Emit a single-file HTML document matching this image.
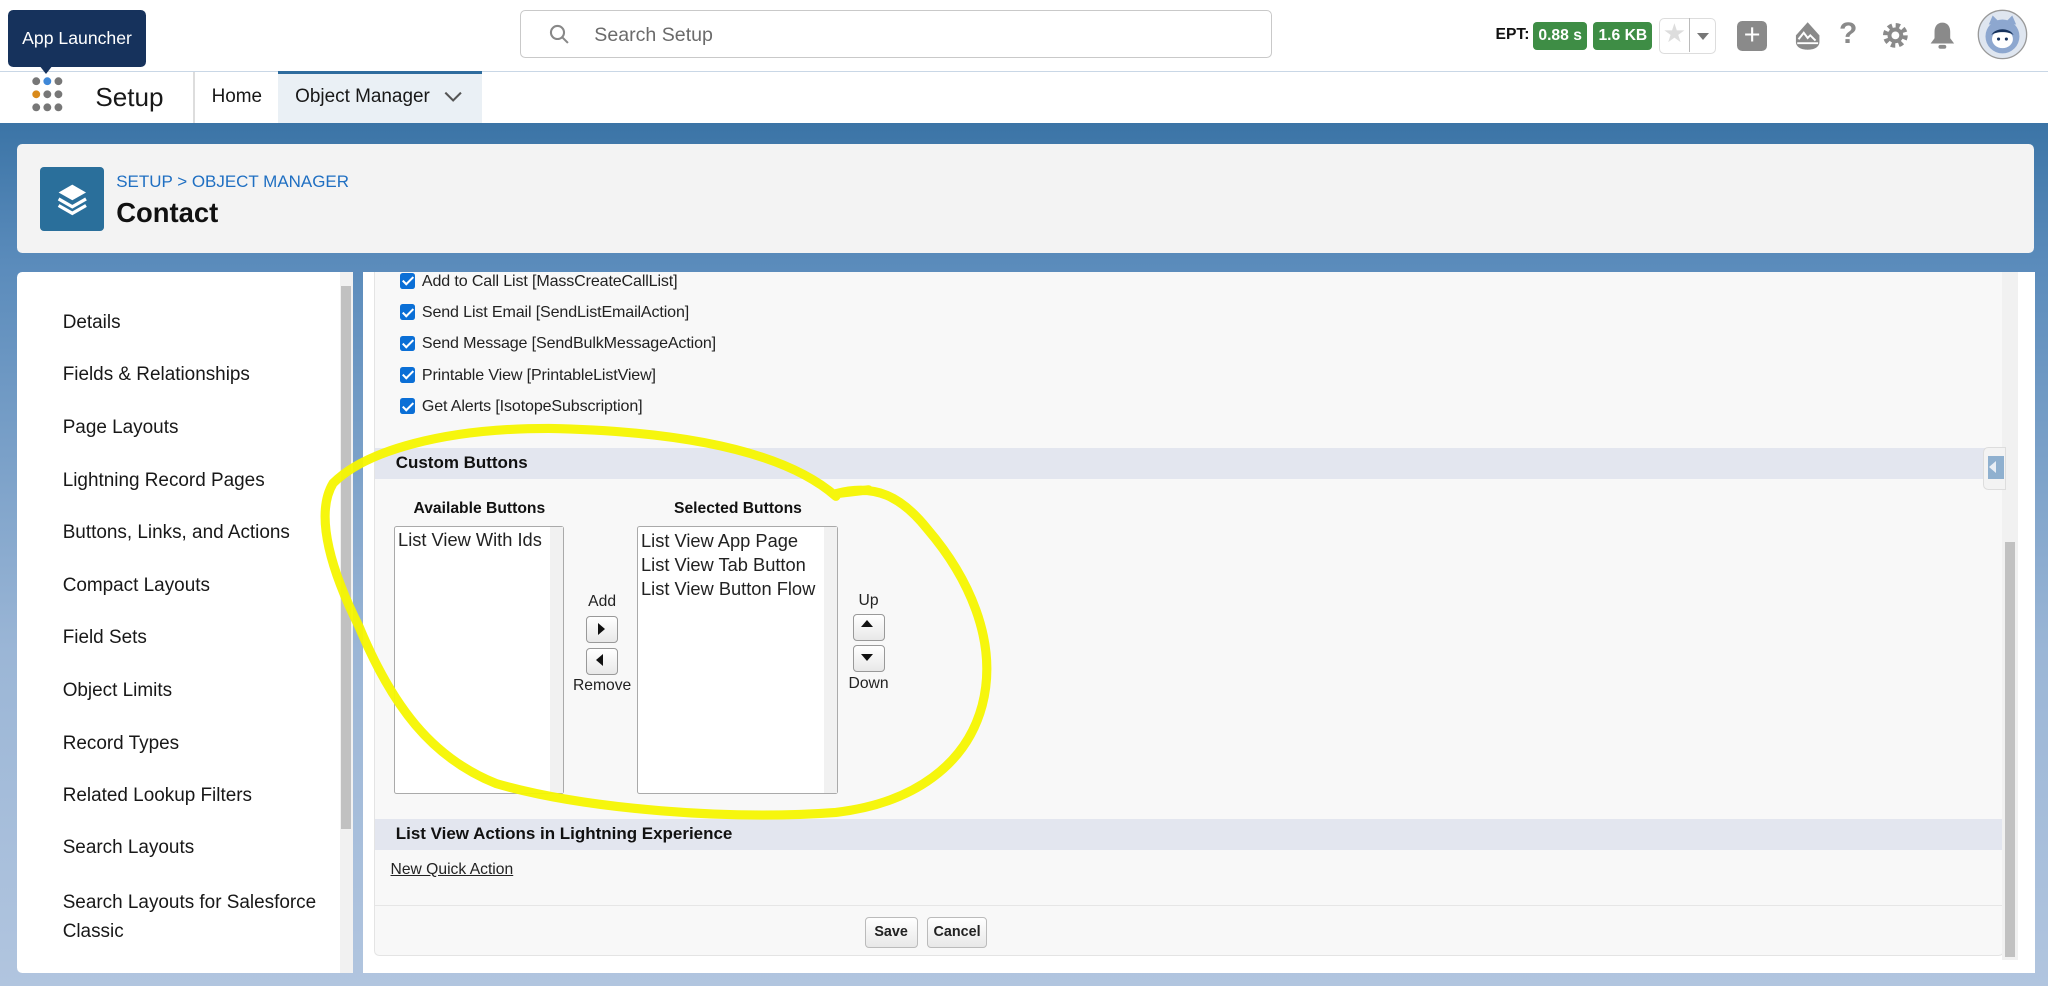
<!DOCTYPE html>
<html><head><meta charset="utf-8"><style>
html,body{margin:0;padding:0;width:2048px;height:986px;overflow:hidden}
#w{zoom:1.30612;width:1568px;height:755px;position:relative;font-family:"Liberation Sans",Arial,sans-serif;background:linear-gradient(#3b74a6 0px,#3b74a6 94px,#5a8bbb 200px,#9bb6d6 500px,#b1c5df 755px);overflow:hidden}
.a{position:absolute}
.cb{position:absolute;left:306px;width:12px;height:12px;background:#0b6fd6;border-radius:2px}
.cb:after{content:"";position:absolute;left:4px;top:1px;width:3px;height:7px;border:solid #fff;border-width:0 2px 2px 0;transform:rotate(45deg)}
.ct{position:absolute;left:323px;font-size:12.3px;color:#222;letter-spacing:-0.1px}
.nav{position:absolute;left:48px;font-size:14.5px;color:#181818}
.lb{position:absolute;background:#fff;border:1px solid #aaa;border-radius:2px}
.lb .sb{position:absolute;right:0;top:0;bottom:0;width:10px;background:#f1f1f1}
.btn{position:absolute;background:linear-gradient(#fff,#e8e8e8);border:1px solid #999;border-radius:3px}
</style></head><body><div id="w">
<div class="a" style="left:0;top:0;width:1568px;height:54px;background:#fff;border-bottom:1px solid #c9d7e6"></div>
<div class="a" style="left:398px;top:8px;width:574px;height:35px;border:1px solid #c9c9c9;border-radius:4px;background:#fff"></div>
<svg class="a" style="left:420px;top:18px" width="16" height="16" viewBox="0 0 16 16"><circle cx="6.5" cy="6.5" r="5" fill="none" stroke="#888" stroke-width="1.6"/><path d="M10 10l4.5 4.5" stroke="#888" stroke-width="1.6"/></svg>
<div class="a" style="left:455px;top:18px;font-size:15px;color:#6b6b6b">Search Setup</div>
<div class="a" style="left:1145px;top:20px;font-size:12px;font-weight:bold;color:#111">EPT:</div>
<div class="a" style="left:1174px;top:17px;width:41px;height:21px;background:#3e8d45;border-radius:3px;color:#fff;font-size:12px;font-weight:bold;text-align:center;line-height:21px">0.88 s</div>
<div class="a" style="left:1220px;top:17px;width:45px;height:21px;background:#3e8d45;border-radius:3px;color:#fff;font-size:12px;font-weight:bold;text-align:center;line-height:21px">1.6 KB</div>
<div class="a" style="left:1270px;top:14px;width:42px;height:26px;border:1px solid #ddd;border-radius:4px;background:#fff"></div>
<div class="a" style="left:1293px;top:14px;width:20px;height:26px;border-left:1px solid #bbb"></div>
<div class="a" style="left:1273px;top:14px;font-size:20px;color:#ddd">★</div>
<div class="a" style="left:1299px;top:25px;border:5px solid transparent;border-top:6px solid #777"></div>
<div class="a" style="left:1330px;top:16px;width:23px;height:23px;background:#8a8a8a;border-radius:4px;color:#fff;font-size:22px;line-height:22px;text-align:center">+</div>
<svg class="a" style="left:1372px;top:16px" width="24" height="24" viewBox="0 0 24 24"><path d="M12 1L3 11v5c0 4 4 6 9 6s9-2 9-6v-5z" fill="#8a8a8a"/><path d="M5 14l4-5 3 4 2-2 4 4M4 17h16" stroke="#fff" stroke-width="1.5" fill="none"/></svg>
<div class="a" style="left:1408px;top:13px;font-size:23px;color:#8a8a8a;font-weight:bold">?</div>
<svg class="a" style="left:1440px;top:16px" width="22" height="22" viewBox="0 0 22 22"><circle cx="11" cy="11" r="7" fill="none" stroke="#8a8a8a" stroke-width="5" stroke-dasharray="3 2.5"/><circle cx="11" cy="11" r="6" fill="#8a8a8a"/><circle cx="11" cy="11" r="3" fill="#fff"/></svg>
<svg class="a" style="left:1476px;top:15px" width="22" height="24" viewBox="0 0 22 24"><path d="M11 2c-4 0-6 3-6 7v5l-3 4h18l-3-4V9c0-4-2-7-6-7z" fill="#8a8a8a"/><rect x="8" y="19" width="6" height="3" rx="1.5" fill="#8a8a8a"/></svg>
<svg class="a" style="left:1514px;top:7px" width="39" height="39" viewBox="0 0 39 39"><circle cx="19.5" cy="19.5" r="18.5" fill="#dfe6f0" stroke="#999"/><circle cx="19.5" cy="21" r="13" fill="#8da7cf"/><path d="M9 12l3-7 5 5M30 12l-3-7-5 5" fill="#8da7cf"/><ellipse cx="19.5" cy="23" rx="8" ry="7" fill="#fff"/><path d="M11 20c3-6 14-6 17 0c-4-3-13-3-17 0z" fill="#16325c"/><circle cx="16.5" cy="23" r="1.2" fill="#16325c"/><circle cx="22.5" cy="23" r="1.2" fill="#16325c"/></svg>
<div class="a" style="left:0;top:55px;width:1568px;height:39px;background:#fff"></div>
<svg class="a" style="left:24px;top:58px" width="26" height="28" viewBox="0 0 26 28"><g fill="#777"><circle cx="4" cy="4" r="3"/><circle cx="21" cy="4" r="3"/><circle cx="12.5" cy="14" r="3"/><circle cx="21" cy="14" r="3"/><circle cx="4" cy="24" r="3"/><circle cx="12.5" cy="24" r="3"/><circle cx="21" cy="24" r="3"/></g><circle cx="12.5" cy="4" r="3" fill="#3f88d8"/><circle cx="4" cy="14" r="3" fill="#d98a1a"/></svg>
<div class="a" style="left:73px;top:63px;font-size:20px;color:#181818">Setup</div>
<div class="a" style="left:148px;top:55px;width:1px;height:39px;background:#ddd"></div>
<div class="a" style="left:162px;top:66px;font-size:14.5px;color:#181818">Home</div>
<div class="a" style="left:213px;top:54px;width:156px;height:40px;background:#eaf0f5;border-top:3px solid #2e6c9e;box-sizing:border-box"></div>
<div class="a" style="left:226px;top:66px;font-size:14.5px;color:#181818">Object Manager</div>
<svg class="a" style="left:340px;top:69px" width="14" height="10" viewBox="0 0 14 10"><path d="M1 2l6 6 6-6" stroke="#555" stroke-width="1.6" fill="none"/></svg>
<div class="a" style="left:6px;top:8px;width:106px;height:43px;background:#16325c;border-radius:4px;color:#fff;font-size:13.5px;line-height:43px;text-align:center">App Launcher</div>
<div class="a" style="left:30px;top:50px;border:6px solid transparent;border-top:7px solid #16325c"></div>
<div class="a" style="left:13px;top:110px;width:1544px;height:84px;background:#f3f3f3;border-radius:4px"></div>
<div class="a" style="left:31px;top:128px;width:49px;height:49px;background:#2a6f9b;border-radius:3px"></div>
<svg class="a" style="left:43px;top:139px" width="25" height="27" viewBox="0 0 25 27"><path d="M12.5 2L23 8l-10.5 6L2 8z" fill="#fff"/><path d="M2 13l10.5 6L23 13M2 18l10.5 6L23 18" stroke="#fff" stroke-width="2.5" fill="none"/></svg>
<div class="a" style="left:89px;top:132px;font-size:13px;color:#1f6fc2">SETUP &gt; OBJECT MANAGER</div>
<div class="a" style="left:89px;top:151px;font-size:21px;font-weight:bold;color:#111">Contact</div>
<div class="a" style="left:13px;top:208px;width:257px;height:537px;background:#fff;border-radius:4px 0 0 4px"></div>
<div class="a" style="left:260px;top:208px;width:10px;height:537px;background:#f1f1f1"></div>
<div class="a" style="left:261px;top:219px;width:8px;height:416px;background:#c1c1c1"></div>
<div class="nav" style="top:239px">Details</div>
<div class="nav" style="top:279px">Fields &amp; Relationships</div>
<div class="nav" style="top:319px">Page Layouts</div>
<div class="nav" style="top:360px">Lightning Record Pages</div>
<div class="nav" style="top:400px">Buttons, Links, and Actions</div>
<div class="nav" style="top:440px">Compact Layouts</div>
<div class="nav" style="top:480px">Field Sets</div>
<div class="nav" style="top:521px">Object Limits</div>
<div class="nav" style="top:561px">Record Types</div>
<div class="nav" style="top:601px">Related Lookup Filters</div>
<div class="nav" style="top:641px">Search Layouts</div>
<div class="nav" style="top:681px;line-height:22px">Search Layouts for Salesforce<br>Classic</div>
<div class="a" style="left:278px;top:208px;width:1280px;height:537px;background:#fff"></div>
<div class="a" style="left:286px;top:208px;width:1247px;height:523px;background:#f8f8f8;border:1px solid #e4e4e4;border-top:none;border-radius:0 0 4px 4px"></div>
<div class="a" style="left:1533px;top:208px;width:12px;height:527px;background:#f1f1f1"></div>
<div class="a" style="left:1535px;top:415px;width:8px;height:318px;background:#c1c1c1"></div>
<div class="cb" style="top:209px"></div><div class="ct" style="top:208px">Add to Call List [MassCreateCallList]</div>
<div class="cb" style="top:233px"></div><div class="ct" style="top:232px">Send List Email [SendListEmailAction]</div>
<div class="cb" style="top:257px"></div><div class="ct" style="top:256px">Send Message [SendBulkMessageAction]</div>
<div class="cb" style="top:281px"></div><div class="ct" style="top:280px">Printable View [PrintableListView]</div>
<div class="cb" style="top:305px"></div><div class="ct" style="top:304px">Get Alerts [IsotopeSubscription]</div>
<div class="a" style="left:287px;top:343px;width:1246px;height:24px;background:#e3e6ef"></div>
<div class="a" style="left:303px;top:347px;font-size:13px;font-weight:bold;color:#111">Custom Buttons</div>
<div class="a" style="left:1518px;top:342px;width:16px;height:32px;background:#f3f3f3;border:1px solid #ddd;border-radius:4px 0 0 4px"></div>
<div class="a" style="left:1522px;top:349px;width:12px;height:18px;background:#8fb0cf"></div>
<div class="a" style="left:1523px;top:353px;border:5px solid transparent;border-right:6px solid #e8eef5;border-left:0"></div>
<div class="a" style="left:302px;top:383px;width:130px;text-align:center;font-size:12px;font-weight:bold;color:#111">Available Buttons</div>
<div class="a" style="left:488px;top:383px;width:154px;text-align:center;font-size:12px;font-weight:bold;color:#111">Selected Buttons</div>
<div class="lb" style="left:302px;top:403px;width:128px;height:203px"><div class="sb"></div><div style="position:absolute;left:2px;top:1px;font-size:14px;color:#222">List View With Ids</div></div>
<div class="lb" style="left:488px;top:403px;width:152px;height:203px"><div class="sb"></div><div style="position:absolute;left:2px;top:1px;font-size:14px;line-height:18.5px;color:#222">List View App Page<br>List View Tab Button<br>List View Button Flow</div></div>
<div class="a" style="left:440px;top:454px;width:42px;text-align:center;font-size:12px;color:#222">Add</div>
<div class="btn" style="left:449px;top:472px;width:23px;height:19px"></div><div class="a" style="left:458px;top:477px;border:5px solid transparent;border-left:6px solid #111;border-right:0"></div>
<div class="btn" style="left:449px;top:496px;width:23px;height:19px"></div><div class="a" style="left:456px;top:501px;border:5px solid transparent;border-right:6px solid #111;border-left:0"></div>
<div class="a" style="left:436px;top:518px;width:50px;text-align:center;font-size:12px;color:#222">Remove</div>
<div class="a" style="left:645px;top:453px;width:40px;text-align:center;font-size:12px;color:#222">Up</div>
<div class="btn" style="left:653px;top:470px;width:23px;height:19px"></div><div class="a" style="left:659px;top:475px;border:5px solid transparent;border-bottom:6px solid #111;border-top:0"></div>
<div class="btn" style="left:653px;top:494px;width:23px;height:19px"></div><div class="a" style="left:659px;top:501px;border:5px solid transparent;border-top:6px solid #111;border-bottom:0"></div>
<div class="a" style="left:640px;top:517px;width:50px;text-align:center;font-size:12px;color:#222">Down</div>
<div class="a" style="left:287px;top:627px;width:1246px;height:24px;background:#e3e6ef"></div>
<div class="a" style="left:303px;top:631px;font-size:13px;font-weight:bold;color:#111">List View Actions in Lightning Experience</div>
<div class="a" style="left:299px;top:659px;font-size:12px;color:#222;text-decoration:underline">New Quick Action</div>
<div class="a" style="left:287px;top:693px;width:1246px;height:1px;background:#e6e6e6"></div>
<div class="btn" style="left:662px;top:702px;width:39px;height:22px;font-size:11px;font-weight:bold;text-align:center;line-height:22px;color:#222;border-color:#bbb">Save</div>
<div class="btn" style="left:710px;top:702px;width:44px;height:22px;font-size:11px;font-weight:bold;text-align:center;line-height:22px;color:#222;border-color:#bbb">Cancel</div>
<svg class="a" style="left:0;top:0" width="1568" height="755" viewBox="0 0 1568 755"><path d="M640 380C600 345 520 330 420 328C340 328 280 345 255 370C240 395 255 440 275 480C300 540 330 580 380 600C450 620 560 628 640 622C700 615 740 585 752 540C765 490 740 440 710 405C690 380 670 370 640 378L665 375" stroke="#f6f600" stroke-width="7" fill="none" stroke-linecap="round" stroke-linejoin="round" opacity="0.95"/></svg>
</div></body></html>
